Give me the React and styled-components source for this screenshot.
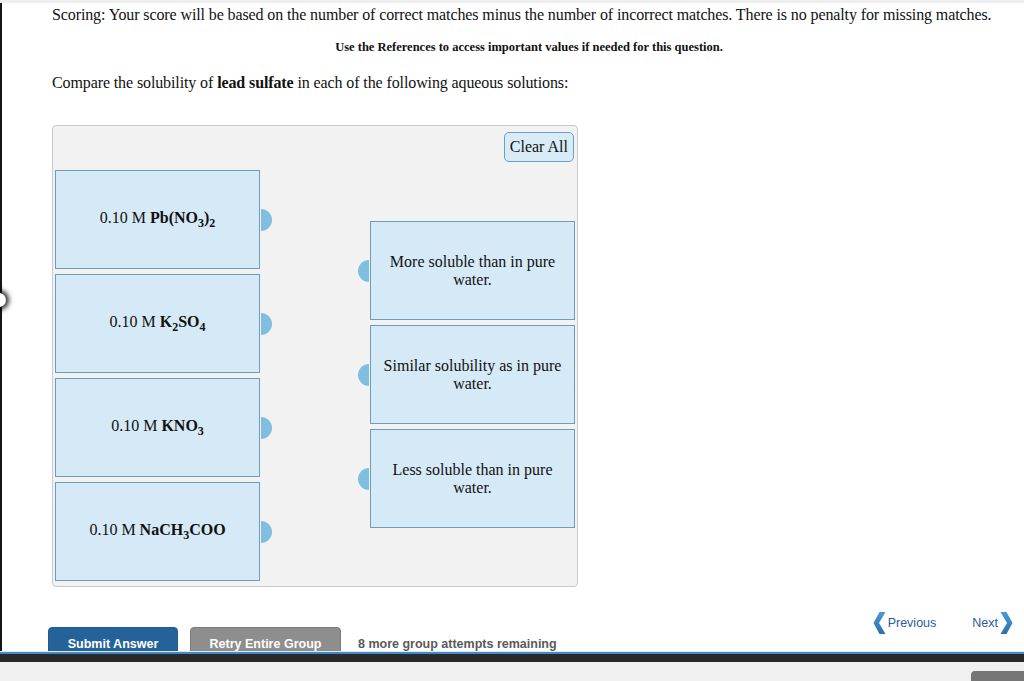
import React from "react";
import styled, { createGlobalStyle } from "styled-components";

const Global = createGlobalStyle`
  html, body { margin: 0; padding: 0; background: #ffffff; }
  body { width: 1024px; height: 681px; overflow: hidden; }
  * { box-sizing: border-box; }
`;

const SERIF = `"Liberation Serif", "Times New Roman", serif`;
const SANS = `"Liberation Sans", Arial, sans-serif`;

const Page = styled.div`
  position: relative;
  width: 1024px;
  height: 681px;
  display: flex;
  flex-direction: column;
  background: #ffffff;
  overflow: hidden;
`;

const TopStrip = styled.div`
  height: 3px;
  background: #efefef;
  flex: none;
`;

const Main = styled.main`
  height: 648px;
  flex: none;
  border-left: 2px solid #151515;
  overflow: hidden;
  display: flex;
  flex-direction: column;
`;

const Content = styled.div`
  padding: 3px 18px 0 50px;
  font-family: ${SERIF};
  color: #111;
`;

const Scoring = styled.p`
  margin: 0;
  font-size: 16px;
  line-height: 18px;
  letter-spacing: -0.11px;
  white-space: nowrap;
`;

const RefNote = styled.p`
  margin: 16px 0 0;
  font-size: 12.5px;
  line-height: 14px;
  font-weight: bold;
  text-align: center;
`;

const Prompt = styled.p`
  margin: 20px 0 0;
  font-size: 16px;
  line-height: 18px;
  letter-spacing: -0.11px;
`;

const Panel = styled.section`
  margin-top: 33px;
  width: 526px;
  background: #f2f2f2;
  border: 1px solid #c6cacd;
  border-radius: 4px;
  padding: 6px 2px 5px 2px;
`;

const PanelHeader = styled.div`
  display: flex;
  justify-content: flex-end;
  padding-right: 1px;
`;

const ClearButton = styled.button`
  height: 30px;
  padding: 0 5px;
  font-family: ${SERIF};
  font-size: 16px;
  color: #111;
  background: #d9ebf7;
  border: 1px solid #6a9fc6;
  border-radius: 5px;
`;

const MatchArea = styled.div`
  margin-top: 8px;
  display: flex;
  justify-content: space-between;
  align-items: flex-start;
`;

const Column = styled.div`
  display: flex;
  flex-direction: column;
  gap: 5px;
  margin-top: ${(p) => p.$offset || 0}px;
`;

const Item = styled.div`
  display: flex;
  align-items: center;
`;

const Box = styled.div`
  width: 205px;
  height: 99px;
  background: #d5e9f6;
  border: 1px solid #6b9dc1;
  display: flex;
  align-items: center;
  justify-content: center;
  text-align: center;
  padding: 0 12px ${(p) => p.$lift || 0}px;
  font-size: 16px;
  line-height: 18px;
  color: #111;
`;

const Knob = styled.span`
  display: block;
  width: 11px;
  height: 22px;
  background: #80bfdf;
  margin: ${(p) => (p.$side === "right" ? "0 0 0 1px" : "0 1px 0 0")};
  border-radius: ${(p) =>
    p.$side === "right" ? "0 11px 11px 0" : "11px 0 0 11px"};
`;

const Chem = styled.b`
  font-weight: bold;
`;

const Sub = styled.sub`
  font-size: 12px;
  vertical-align: -4px;
  line-height: 0;
`;

const Footer = styled.div`
  margin-top: 25px;
  padding: 0 11px 0 46px;
  display: flex;
  justify-content: space-between;
  align-items: flex-start;
  font-family: ${SANS};
`;

const Actions = styled.div`
  display: flex;
  align-items: center;
  padding-top: 15px;
`;

const ActionButton = styled.button`
  height: 34px;
  width: ${(p) => p.$w}px;
  margin-right: ${(p) => p.$gap}px;
  padding: 0;
  font-family: ${SANS};
  font-size: 12.5px;
  font-weight: bold;
  color: #ffffff;
  background: ${(p) => (p.$primary ? "#26629a" : "#8e8e8e")};
  border: 1px solid ${(p) => (p.$primary ? "#215a8e" : "#7c7c7c")};
  border-radius: 4px;
`;

const Attempts = styled.span`
  font-size: 12.5px;
  font-weight: bold;
  color: #5a5a5a;
`;

const Nav = styled.nav`
  display: flex;
  align-items: center;
  gap: 36px;
`;

const NavLink = styled.a`
  display: flex;
  align-items: center;
  gap: 2px;
  font-size: 12.5px;
  color: #2a5d9c;
  text-decoration: none;
`;

const Chevron = ({ dir }) => (
  <svg width="13" height="22" viewBox="0 0 13 22" aria-hidden="true">
    <defs>
      <linearGradient id={`chev-${dir}`} x1="0" y1="0" x2="0" y2="1">
        <stop offset="0" stopColor="#4a9ad6" />
        <stop offset="1" stopColor="#2b6fae" />
      </linearGradient>
    </defs>
    <path
      d={
        dir === "left"
          ? "M6.5 0 L12.5 0 L6 11 L12.5 22 L6.5 22 L0.5 11 Z"
          : "M6.5 0 L0.5 0 L7 11 L0.5 22 L6.5 22 L12.5 11 Z"
      }
      fill={`url(#chev-${dir})`}
    />
  </svg>
);

const BottomBar = styled.div`
  flex: none;
  height: 11px;
  border-top: 1px solid #e6e6e6;
  border-bottom: 8px solid #2a2a2a;
  background: #3c8bcc;
`;

const Lower = styled.div`
  flex: 1;
  background: #f0f0f0;
  display: flex;
  justify-content: flex-end;
  align-items: flex-end;
`;

const Tab = styled.div`
  width: 53px;
  height: 10px;
  background: #767676;
  border-radius: 4px 0 0 0;
`;

const EdgeHandle = styled.div`
  position: absolute;
  left: -8px;
  top: 293px;
  width: 14px;
  height: 14px;
  border-radius: 50%;
  background: #ffffff;
  box-shadow: 0 0 5px 3px rgba(0, 0, 0, 0.85);
`;

const leftItems = [
  <>0.10 M <Chem>Pb(NO<Sub>3</Sub>)<Sub>2</Sub></Chem></>,
  <>0.10 M <Chem>K<Sub>2</Sub>SO<Sub>4</Sub></Chem></>,
  <>0.10 M <Chem>KNO<Sub>3</Sub></Chem></>,
  <>0.10 M <Chem>NaCH<Sub>3</Sub>COO</Chem></>,
];

const rightItems = [
  "More soluble than in pure water.",
  "Similar solubility as in pure water.",
  "Less soluble than in pure water.",
];

export default function App() {
  return (
    <>
      <Global />
      <Page>
        <TopStrip />
        <Main>
          <Content>
            <Scoring>
              Scoring: Your score will be based on the number of correct matches minus the number of incorrect matches. There is no penalty for missing matches.
            </Scoring>
            <RefNote>Use the References to access important values if needed for this question.</RefNote>
            <Prompt>
              Compare the solubility of <b>lead sulfate</b> in each of the following aqueous solutions:
            </Prompt>
            <Panel>
              <PanelHeader>
                <ClearButton>Clear All</ClearButton>
              </PanelHeader>
              <MatchArea>
                <Column>
                  {leftItems.map((c, i) => (
                    <Item key={i}>
                      <Box $lift={4}>
                        <span>{c}</span>
                      </Box>
                      <Knob $side="right" />
                    </Item>
                  ))}
                </Column>
                <Column $offset={51}>
                  {rightItems.map((t, i) => (
                    <Item key={i}>
                      <Knob $side="left" />
                      <Box>{t}</Box>
                    </Item>
                  ))}
                </Column>
              </MatchArea>
            </Panel>
          </Content>
          <Footer>
            <Actions>
              <ActionButton $primary $w={130} $gap={12}>Submit Answer</ActionButton>
              <ActionButton $w={151} $gap={17}>Retry Entire Group</ActionButton>
              <Attempts>8 more group attempts remaining</Attempts>
            </Actions>
            <Nav>
              <NavLink href="#">
                <Chevron dir="left" />
                Previous
              </NavLink>
              <NavLink href="#">
                Next
                <Chevron dir="right" />
              </NavLink>
            </Nav>
          </Footer>
        </Main>
        <BottomBar />
        <Lower>
          <Tab />
        </Lower>
        <EdgeHandle />
      </Page>
    </>
  );
}
